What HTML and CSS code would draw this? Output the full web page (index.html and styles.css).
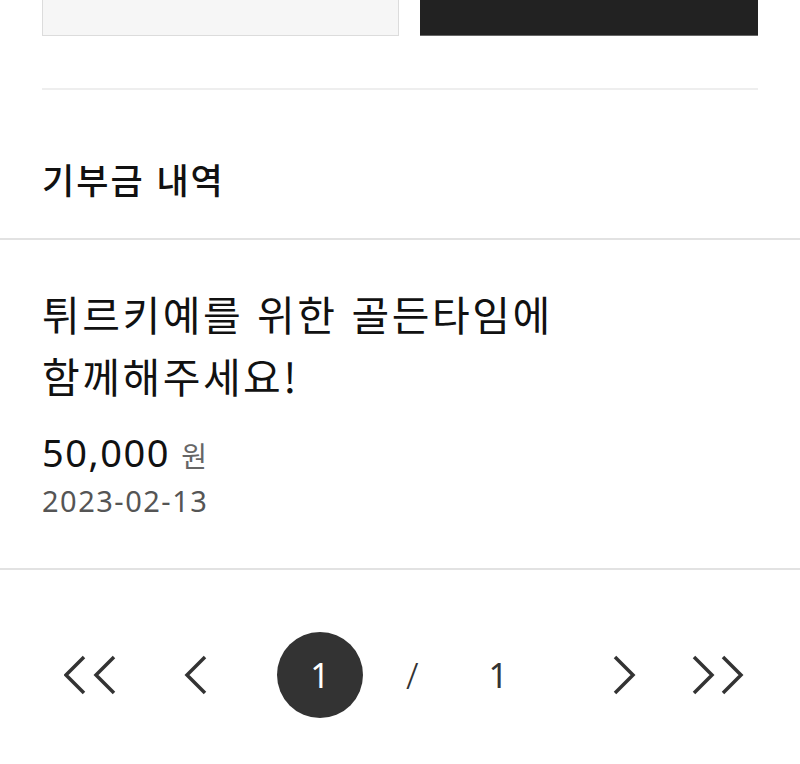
FILE: index.html
```html
<!DOCTYPE html>
<html lang="ko">
<head>
    <meta charset="UTF-8">
    <meta name="viewport" content="width=device-width, initial-scale=1.0">
    <title>기부금 내역</title>
    <link rel="stylesheet" href="styles.css">
</head>
<body>
    <div class="top">
        <div class="actions">
            <button class="btn btn-light"></button>
            <button class="btn btn-dark"></button>
        </div>
        <div class="divider"></div>
        <h2 class="section-title">기부금 내역</h2>
    </div>

    <ul class="history">
        <li class="history-item">
            <p class="item-title">튀르키예를 위한 골든타임에<br>함께해주세요!</p>
            <p class="item-amount">50,000 <span class="unit">원</span></p>
            <p class="item-date">2023-02-13</p>
        </li>
    </ul>

    <div class="pagination">
        <a class="page-arrow first" href="#">
            <svg width="54" height="40" viewBox="0 0 54 40"><polyline points="20,2 2,20 20,38"/><polyline points="50,2 32,20 50,38"/></svg>
        </a>
        <a class="page-arrow prev" href="#">
            <svg width="24" height="40" viewBox="0 0 24 40"><polyline points="21,2 3,20 21,38"/></svg>
        </a>
        <span class="page-current">1</span>
        <span class="page-sep">/</span>
        <span class="page-total">1</span>
        <a class="page-arrow next" href="#">
            <svg width="24" height="40" viewBox="0 0 24 40"><polyline points="3,2 21,20 3,38"/></svg>
        </a>
        <a class="page-arrow last" href="#">
            <svg width="54" height="40" viewBox="0 0 54 40"><polyline points="3,2 21,20 3,38"/><polyline points="32,2 50,20 32,38"/></svg>
        </a>
    </div>
</body>
</html>
```

FILE: styles.css
```css
* {
    margin: 0;
    padding: 0;
    box-sizing: border-box;
}

body {
    font-family: "Noto Sans", "Noto Sans CJK KR", sans-serif;
    background-color: #fff;
    color: #111;
}

.top {
    padding: 0 42px;
}

.actions {
    display: flex;
    gap: 21px;
    height: 36px;
}

.btn {
    height: 36px;
    border: none;
}

.btn-light {
    width: 357px;
    background-color: #f6f6f6;
    border: 1px solid #dcdcdc;
    border-top: none;
}

.btn-dark {
    flex: 1;
    background-color: #222;
    border-bottom: 1px solid #666;
}

.divider {
    margin-top: 52px;
    height: 2px;
    background-color: #eee;
}

.section-title {
    font-family: "Noto Sans CJK KR", sans-serif;
    font-size: 35px;
    font-weight: 500;
    line-height: 50px;
    letter-spacing: 2px;
    padding-top: 64px;
    padding-bottom: 34px;
}

.history {
    list-style: none;
    border-top: 2px solid #e2e2e2;
}

.history-item {
    padding: 42px 42px 45px;
    border-bottom: 2px solid #e2e2e2;
}

.item-title {
    font-family: "Noto Sans CJK KR", sans-serif;
    font-size: 41px;
    line-height: 62px;
    letter-spacing: 2.5px;
    color: #111;
}

.item-amount {
    margin-top: 22px;
    font-size: 38px;
    line-height: 48px;
    letter-spacing: 1.5px;
    color: #111;
}

.item-amount .unit {
    font-family: "Noto Sans CJK KR", sans-serif;
    font-size: 28px;
    color: #666;
    letter-spacing: 0;
}

.item-date {
    margin-top: 0;
    font-size: 29px;
    line-height: 44px;
    letter-spacing: 1.5px;
    color: #555;
}

.pagination {
    display: flex;
    align-items: center;
    height: 86px;
    margin-top: 62px;
    padding-left: 64px;
    color: #333;
}

.page-arrow {
    display: flex;
}

.page-arrow svg polyline {
    fill: none;
    stroke: #333;
    stroke-width: 3.5;
}

.page-arrow.first { margin-right: 66px; }
.page-arrow.prev { margin-right: 69px; }

.page-current {
    width: 86px;
    height: 86px;
    border-radius: 50%;
    background-color: #333;
    color: #fff;
    display: flex;
    justify-content: center;
    align-items: center;
    font-size: 34px;
    margin-right: 43px;
}

.page-sep {
    font-size: 36px;
    font-weight: 300;
    margin-right: 70px;
}

.page-total {
    font-size: 34px;
    margin-right: 104px;
}

.page-arrow.next { margin-right: 55px; }
```
